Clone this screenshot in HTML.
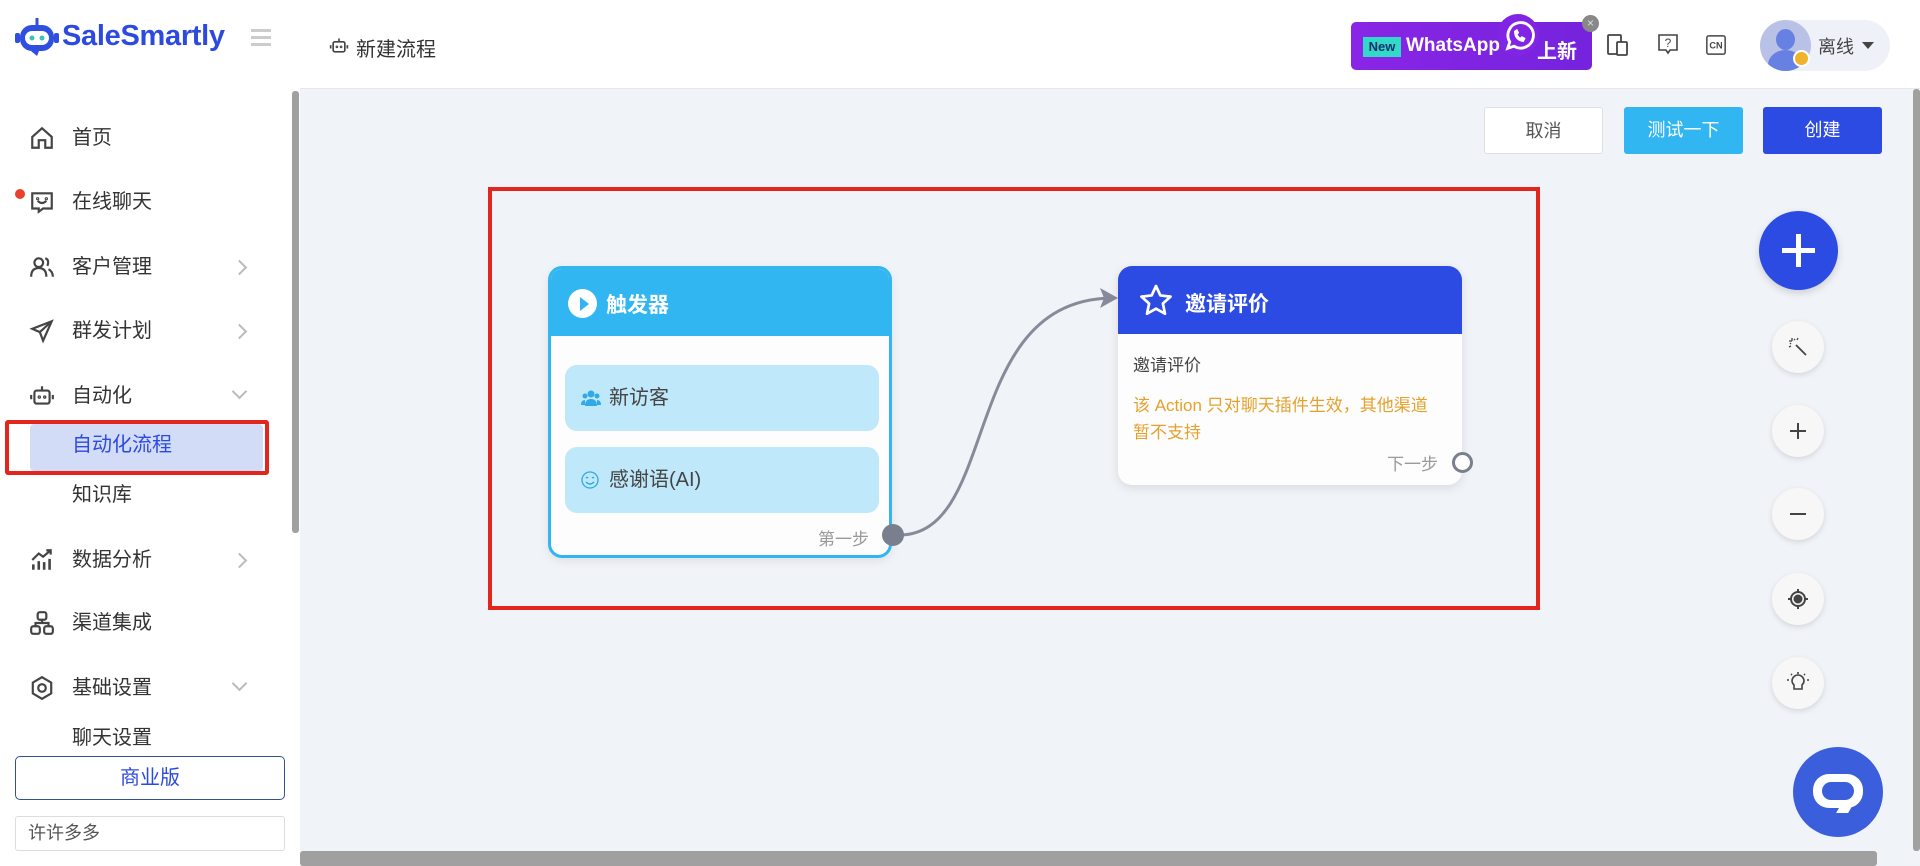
<!DOCTYPE html>
<html><head><meta charset="utf-8"><style>
*{box-sizing:border-box;margin:0;padding:0}
body{width:1920px;height:866px;overflow:hidden;position:relative;background:#f0f3f7;font-family:"Liberation Sans","Noto Sans CJK SC",sans-serif;color:#333}
.abs{position:absolute}
#side{left:0;top:0;width:300px;height:866px;background:#fff}
#hdr{left:300px;top:0;width:1620px;height:89px;background:#fff;border-bottom:1px solid #e4e7ec}
.mi{position:absolute;left:72px;font-size:20px;color:#333;line-height:24px}
.ic{position:absolute;left:29px;width:26px;height:26px}
.arr{position:absolute;left:234px;width:11px;height:11px;border-right:2px solid #bbb;border-top:2px solid #bbb;transform:rotate(45deg)}
.arr.d{transform:rotate(135deg)}
.btn{position:absolute;top:107px;height:47px;width:119px;border-radius:3px;font-size:18px;text-align:center;line-height:47px}
.tool{position:absolute;left:1772px;width:52px;height:52px;border-radius:50%;background:#f7f7f8;box-shadow:0 2px 6px rgba(0,0,0,.12)}
.tool svg{position:absolute;left:14px;top:14px}
.item{position:absolute;left:14px;width:314px;height:66px;border-radius:12px;background:#bfe8fa;font-size:20px;color:#444;line-height:66px;padding-left:44px}
</style></head><body>
<div id="side" class="abs">
  <svg class="abs" style="left:14px;top:16px" width="46" height="42" viewBox="0 0 46 42"><line x1="23" y1="2" x2="23" y2="9" stroke="#2f4fe0" stroke-width="3"/><rect x="6" y="9" width="34" height="26" rx="12" fill="#2f4fe0"/><rect x="11" y="15" width="24" height="14" rx="7" fill="#fff"/><circle cx="18" cy="22" r="2.5" fill="#3cc2b0"/><circle cx="28" cy="22" r="2.5" fill="#3cc2b0"/><rect x="1" y="17" width="5" height="10" rx="2" fill="#2f4fe0"/><rect x="40" y="17" width="5" height="10" rx="2" fill="#2f4fe0"/><path d="M17 35 L23 40 L25 35Z" fill="#2f4fe0"/></svg>
  <div class="abs" style="left:62px;top:20px;font-size:29px;font-weight:bold;color:#2d4ae0;letter-spacing:-0.3px">SaleSmartly</div>
  <div class="abs" style="left:251px;top:29px;width:20px;height:3px;background:#ccc;box-shadow:0 7px 0 #ccc,0 14px 0 #ccc"></div>

  <svg class="ic" style="top:125px" viewBox="0 0 24 24" fill="none" stroke="#444" stroke-width="2"><path d="M3 11 L12 3 L21 11 V21 H15 V14 H9 V21 H3Z"/></svg>
  <div class="mi" style="top:126px">首页</div>
  <div class="abs" style="left:15px;top:189px;width:10px;height:10px;border-radius:50%;background:#e8412c"></div>
  <svg class="ic" style="top:189px" viewBox="0 0 24 24" fill="none" stroke="#444" stroke-width="2"><path d="M3 4H21V18H13L9 21V18H3Z"/><path d="M8 11Q12 15 16 11"/><circle cx="8" cy="9" r=".5"/><circle cx="16" cy="9" r=".5"/></svg>
  <div class="mi" style="top:190px">在线聊天</div>
  <svg class="ic" style="top:254px" viewBox="0 0 24 24" fill="none" stroke="#444" stroke-width="2"><circle cx="9" cy="8" r="4"/><path d="M2 21Q2 13 9 13Q16 13 16 21"/><path d="M15 4Q19 5 17 11M18 14Q22 16 22 21"/></svg>
  <div class="mi" style="top:255px">客户管理</div><div class="arr" style="top:262px"></div>
  <svg class="ic" style="top:318px" viewBox="0 0 24 24" fill="none" stroke="#444" stroke-width="2"><path d="M21 3L3 10L10 13L13 21Z M10 13L21 3"/></svg>
  <div class="mi" style="top:319px">群发计划</div><div class="arr" style="top:326px"></div>
  <svg class="ic" style="top:383px" viewBox="0 0 24 24" fill="none" stroke="#444" stroke-width="2"><rect x="5" y="7" width="14" height="12" rx="2"/><line x1="12" y1="3" x2="12" y2="7"/><line x1="2" y1="11" x2="2" y2="15"/><line x1="22" y1="11" x2="22" y2="15"/><circle cx="9.5" cy="13" r=".6"/><circle cx="14.5" cy="13" r=".6"/></svg>
  <div class="mi" style="top:384px">自动化</div><div class="arr d" style="top:386px"></div>
  <div class="abs" style="left:5px;top:420px;width:264px;height:55px;border:4px solid #e3261d;border-radius:3px"></div>
  <div class="abs" style="left:30px;top:424px;width:233px;height:47px;background:#d2dcf7;border-radius:4px"></div>
  <div class="mi" style="top:433px;color:#2d4ae0">自动化流程</div>
  <div class="mi" style="top:483px">知识库</div>
  <svg class="ic" style="top:547px" viewBox="0 0 24 24" fill="none" stroke="#444" stroke-width="2.4"><path d="M4 21V16M9 21V13M14 21V14M19 21V11"/><path d="M3 12L9 6L13 9L20 3M16 3H20V7" stroke-width="2"/></svg>
  <div class="mi" style="top:548px">数据分析</div><div class="arr" style="top:555px"></div>
  <svg class="ic" style="top:610px" viewBox="0 0 24 24" fill="none" stroke="#444" stroke-width="2"><rect x="8" y="2" width="8" height="7" rx="2"/><rect x="2" y="15" width="8" height="7" rx="2"/><rect x="14" y="15" width="8" height="7" rx="2"/><path d="M12 9V12M6 15V12H18V15"/></svg>
  <div class="mi" style="top:611px">渠道集成</div>
  <svg class="ic" style="top:675px" viewBox="0 0 24 24" fill="none" stroke="#444" stroke-width="2"><path d="M12 2L20.5 7V17L12 22L3.5 17V7Z"/><circle cx="12" cy="12" r="3.5"/></svg>
  <div class="mi" style="top:676px">基础设置</div><div class="arr d" style="top:678px"></div>
  <div class="mi" style="top:726px">聊天设置</div>
  <div class="abs" style="left:15px;top:756px;width:270px;height:44px;border:1px solid #34508f;border-radius:5px;text-align:center;line-height:42px;font-size:20px;color:#2d4ae0">商业版</div>
  <div class="abs" style="left:15px;top:816px;width:270px;height:35px;border:1px solid #ddd;border-radius:3px;line-height:33px;padding-left:12px;font-size:18px;color:#555">许许多多</div>
  <div class="abs" style="left:292px;top:91px;width:7px;height:442px;background:#a0a0a0;border-radius:3px"></div>
</div>

<div id="hdr" class="abs">
  <svg class="abs" style="left:29px;top:36px" width="20" height="20" viewBox="0 0 24 24" fill="none" stroke="#444" stroke-width="2"><rect x="5" y="7" width="14" height="12" rx="2"/><line x1="12" y1="3" x2="12" y2="7"/><line x1="2" y1="11" x2="2" y2="15"/><line x1="22" y1="11" x2="22" y2="15"/><circle cx="9.5" cy="13" r=".6"/><circle cx="14.5" cy="13" r=".6"/></svg>
  <div class="abs" style="left:56px;top:33px;font-size:20px;color:#333">新建流程</div>
  <div class="abs" style="left:1051px;top:22px;width:241px;height:48px;border-radius:5px;background:linear-gradient(90deg,#8a25e6,#7523dd)"></div>
  <div class="abs" style="left:1197px;top:14px;width:42px;height:42px;border-radius:50%;background:#8224e3"></div>
  <div class="abs" style="left:1063px;top:37px;width:38px;height:20px;background:#30d9c8;color:#14306d;font-size:13px;font-weight:bold;text-align:center;line-height:20px">New</div>
  <div class="abs" style="left:1106px;top:35px;font-size:19px;color:#fff;font-weight:bold">WhatsApp</div>
  <svg class="abs" style="left:1202px;top:20px" width="34" height="34" viewBox="0 0 24 24" fill="none" stroke="#fff" stroke-width="2"><path d="M4 20L5.5 15.5A9 9 0 1 1 8.5 18.5Z"/><path d="M9 8Q9 14 15 15L16 13L14 12L13 13Q11 12 10.5 10L11.5 9L10.5 7Z" fill="#fff" stroke-width="1"/></svg>
  <div class="abs" style="left:1237px;top:35px;font-size:20px;color:#fff;font-weight:bold">上新</div>
  <div class="abs" style="left:1282px;top:15px;width:17px;height:17px;border-radius:50%;background:#888;color:#ddd;font-size:12px;text-align:center;line-height:17px">×</div>
  <svg class="abs" style="left:1306px;top:33px" width="24" height="24" viewBox="0 0 24 24" fill="none" stroke="#444" stroke-width="1.8"><rect x="2" y="2" width="13" height="19" rx="1"/><rect x="11" y="9" width="10" height="13" rx="1" fill="#fff"/></svg>
  <svg class="abs" style="left:1356px;top:32px" width="24" height="24" viewBox="0 0 24 24" fill="none" stroke="#444" stroke-width="1.6"><path d="M3 3H21V18H14L12 21L10 18H3Z"/><text x="12" y="15" font-size="12" text-anchor="middle" fill="#444" stroke="none" font-family="Liberation Sans">?</text></svg>
  <svg class="abs" style="left:1405px;top:34px" width="22" height="22" viewBox="0 0 24 24" fill="none" stroke="#444" stroke-width="1.6"><rect x="2" y="2" width="20" height="20" rx="2"/><text x="12" y="16" font-size="10" font-weight="bold" text-anchor="middle" fill="#444" stroke="none" font-family="Liberation Sans">CN</text></svg>
  <div class="abs" style="left:1460px;top:20px;width:130px;height:51px;border-radius:26px;background:#eef1f8"></div>
  <div class="abs" style="left:1460px;top:20px;width:51px;height:51px;border-radius:50%;background:#b9c2e6;overflow:hidden"><div style="position:absolute;left:16px;top:9px;width:19px;height:21px;border-radius:50%;background:#6781e2"></div><div style="position:absolute;left:8px;top:30px;width:35px;height:30px;border-radius:50%;background:#6781e2"></div></div>
  <div class="abs" style="left:1493px;top:50px;width:17px;height:17px;border-radius:50%;background:#eeb32a;border:2px solid #fff"></div>
  <div class="abs" style="left:1518px;top:33px;font-size:18px;color:#444">离线</div>
  <div class="abs" style="left:1562px;top:42px;border-left:6px solid transparent;border-right:6px solid transparent;border-top:7px solid #444"></div>
</div>

<div class="btn" style="left:1484px;background:#fff;border:1px solid #dcdfe6;color:#555">取消</div>
<div class="btn" style="left:1624px;background:#31b6f2;color:#fff">测试一下</div>
<div class="btn" style="left:1763px;background:#2c4be3;color:#fff">创建</div>

<div class="abs" style="left:488px;top:187px;width:1052px;height:423px;border:4px solid #e3261d"></div>

<svg class="abs" style="left:0;top:0" width="1920" height="866"><path d="M902 535 C1000 530 960 300 1112 298" fill="none" stroke="#878a99" stroke-width="3"/><path d="M1118 298 L1100 288 L1104 298 L1100 308Z" fill="#878a99"/></svg>

<div class="abs" style="left:548px;top:266px;width:344px;height:292px;border:3px solid #31b6f2;border-radius:14px;background:#fdfdfd;box-shadow:0 3px 10px rgba(0,0,0,.08);overflow:hidden">
  <div style="position:absolute;left:0;top:0;right:0;height:67px;background:#31b6f2"></div>
  <div style="position:absolute;left:17px;top:20px;width:29px;height:29px;border-radius:50%;background:#fff"></div>
  <div style="position:absolute;left:29px;top:28px;border-top:7px solid transparent;border-bottom:7px solid transparent;border-left:9px solid #31b6f2"></div>
  <div style="position:absolute;left:55px;top:20px;font-size:21px;font-weight:bold;color:#fff">触发器</div>
  <div class="item" style="top:96px">新访客</div>
  <div class="item" style="top:178px">感谢语(AI)</div>
  <svg style="position:absolute;left:30px;top:120px" width="20" height="18" viewBox="0 0 20 18" fill="#31a9e8"><circle cx="10" cy="5" r="3.5"/><circle cx="4" cy="7" r="2.5"/><circle cx="16" cy="7" r="2.5"/><path d="M4 17Q4 10 10 10Q16 10 16 17Z"/><path d="M0 16Q0 11 4 11L4 16Z M20 16Q20 11 16 11L16 16Z"/></svg>
  <svg style="position:absolute;left:30px;top:202px" width="18" height="18" viewBox="0 0 18 18" fill="none" stroke="#31a9e8" stroke-width="1.3"><circle cx="9" cy="9" r="8"/><path d="M5 11Q9 15 13 11M5 7Q6 6 7 7M11 7Q12 6 13 7"/></svg>
  <div style="position:absolute;right:20px;top:256px;font-size:17px;color:#999">第一步</div>
</div>
<div class="abs" style="left:882px;top:524px;width:22px;height:22px;border-radius:50%;background:#7a7f8e"></div>

<div class="abs" style="left:1118px;top:266px;width:344px;height:219px;border-radius:14px;background:#fdfdfd;box-shadow:0 3px 10px rgba(0,0,0,.1);overflow:hidden">
  <div style="position:absolute;left:0;top:0;right:0;height:68px;background:#2c4be3"></div>
  <svg style="position:absolute;left:18px;top:17px" width="40" height="36" viewBox="0 0 24 24" fill="none" stroke="#fff" stroke-width="1.8" stroke-linejoin="round"><path d="M12 2L14.9 8.3L21.7 9.1L16.6 13.7L18 20.5L12 17.1L6 20.5L7.4 13.7L2.3 9.1L9.1 8.3Z"/></svg>
  <div style="position:absolute;left:67px;top:22px;font-size:21px;font-weight:bold;color:#fff">邀请评价</div>
  <div style="position:absolute;left:15px;top:85px;font-size:17px;color:#444">邀请评价</div>
  <div style="position:absolute;left:15px;top:126px;width:312px;font-size:17px;color:#e5a12e;line-height:27px">该 Action 只对聊天插件生效，其他渠道<br>暂不支持</div>
  <div style="position:absolute;right:24px;top:184px;font-size:17px;color:#999">下一步</div>
</div>
<div class="abs" style="left:1452px;top:452px;width:21px;height:21px;border-radius:50%;border:3px solid #7a7f8e;background:#fff"></div>

<div class="abs" style="left:1759px;top:211px;width:79px;height:79px;border-radius:50%;background:#2c4be3;box-shadow:0 3px 8px rgba(0,0,0,.15)"><div style="position:absolute;left:23px;top:37px;width:33px;height:5px;background:#fff"></div><div style="position:absolute;left:37px;top:23px;width:5px;height:33px;background:#fff"></div></div>
<div class="tool" style="top:321px"><svg width="24" height="24" viewBox="0 0 24 24" fill="none" stroke="#444" stroke-width="1.8"><path d="M10 10L20 20"/><path d="M6 3V6M3 6H6M9 4L8 5M4 9L5 8M3 12L5 11M12 3L11 5" stroke-width="1.3"/></svg></div>
<div class="tool" style="top:405px"><svg width="24" height="24" viewBox="0 0 24 24" stroke="#444" stroke-width="2"><path d="M12 4V20M4 12H20"/></svg></div>
<div class="tool" style="top:488px"><svg width="24" height="24" viewBox="0 0 24 24" stroke="#444" stroke-width="2"><path d="M4 12H20"/></svg></div>
<div class="tool" style="top:573px"><svg width="24" height="24" viewBox="0 0 24 24" fill="none" stroke="#444" stroke-width="2"><circle cx="12" cy="12" r="7"/><circle cx="12" cy="12" r="3.5" fill="#444"/><path d="M12 2V5M12 19V22M2 12H5M19 12H22"/></svg></div>
<div class="tool" style="top:657px"><svg width="24" height="24" viewBox="0 0 24 24" fill="none" stroke="#444" stroke-width="1.6"><path d="M8 14Q6 12 6 10A6 6 0 0 1 18 10Q18 12 16 14V18H8Z"/><path d="M12 1V3M3 9H1M23 9H21M5 3L6 4M19 3L18 4"/></svg></div>
<div class="abs" style="left:1793px;top:747px;width:90px;height:90px;border-radius:50%;background:#3b5fdc"><div style="position:absolute;left:20px;top:27px;width:50px;height:34px;border-radius:16px;background:#fff"></div><div style="position:absolute;left:29px;top:35px;width:32px;height:18px;border-radius:9px;background:#3b5fdc"></div><div style="position:absolute;left:46px;top:56px;width:12px;height:10px;background:#fff;transform:skewX(-30deg)"></div></div>

<div class="abs" style="left:300px;top:851px;width:1577px;height:15px;background:#a0a0a0;border-radius:3px"></div>
<div class="abs" style="left:1913px;top:89px;width:7px;height:762px;background:#a0a0a0;border-radius:3px"></div>
</body></html>
